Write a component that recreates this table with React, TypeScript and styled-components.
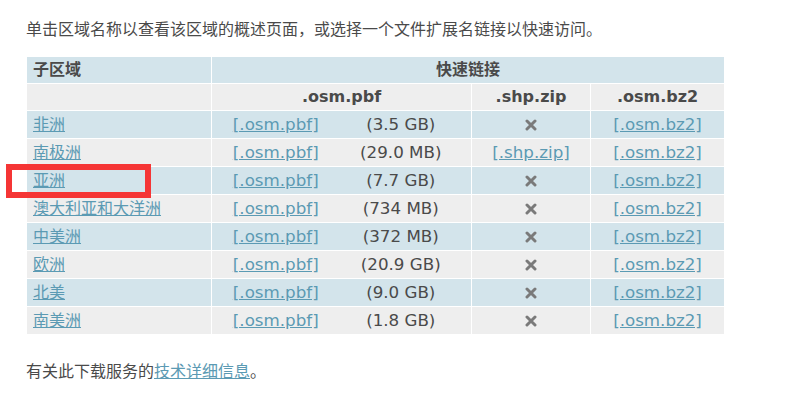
import React from 'react'
import styled, { createGlobalStyle } from 'styled-components'

const GlobalStyle = createGlobalStyle`
  body {
    margin: 0;
    background: #fff;
    font-family: 'DejaVu Sans', Verdana, 'Noto Sans CJK SC', sans-serif;
    font-size: 16px;
    color: #4a4a4a;
  }
`

interface Region {
  name: string
  size: string
  shp?: boolean
  marked?: boolean
}

const regions: Region[] = [
  { name: '非洲', size: '(3.5 GB)' },
  { name: '南极洲', size: '(29.0 MB)', shp: true },
  { name: '亚洲', size: '(7.7 GB)', marked: true },
  { name: '澳大利亚和大洋洲', size: '(734 MB)' },
  { name: '中美洲', size: '(372 MB)' },
  { name: '欧洲', size: '(20.9 GB)' },
  { name: '北美', size: '(9.0 GB)' },
  { name: '南美洲', size: '(1.8 GB)' },
]

function CrossIcon() {
  return (
    <svg width='12' height='12' viewBox='0 0 12 12'>
      <path d='M2 2 L10 10 M10 2 L2 10' stroke='#7a7a7a' strokeWidth='3' strokeLinecap='round' />
    </svg>
  )
}

export default function App() {
  return (
    <Page>
      <GlobalStyle />
      <Text>单击区域名称以查看该区域的概述页面，或选择一个文件扩展名链接以快速访问。</Text>
      <Table>
        <colgroup>
          <col style={{ width: 185 }} />
          <col style={{ width: 128 }} />
          <col style={{ width: 132 }} />
          <col style={{ width: 119 }} />
          <col style={{ width: 134 }} />
        </colgroup>
        <thead>
          <Row $tone='blue'>
            <HeadCell $align='left'>子区域</HeadCell>
            <HeadCell colSpan={4}>快速链接</HeadCell>
          </Row>
          <Row $tone='grey'>
            <HeadCell />
            <HeadCell colSpan={2}>.osm.pbf</HeadCell>
            <HeadCell>.shp.zip</HeadCell>
            <HeadCell>.osm.bz2</HeadCell>
          </Row>
        </thead>
        <tbody>
          {regions.map((r, i) => (
            <Row key={r.name} $tone={i % 2 === 0 ? 'blue' : 'grey'}>
              <NameCell>
                <Link href='#'>{r.name}</Link>
                {r.marked && <Marker />}
              </NameCell>
              <LinkCell>
                <Link href='#'>[.osm.pbf]</Link>
              </LinkCell>
              <SizeCell>{r.size}</SizeCell>
              <Cell>{r.shp ? <Link href='#'>[.shp.zip]</Link> : <CrossIcon />}</Cell>
              <Cell>
                <Link href='#'>[.osm.bz2]</Link>
              </Cell>
            </Row>
          ))}
        </tbody>
      </Table>
      <Footer>
        有关此下载服务的<Link href='#'>技术详细信息</Link>。
      </Footer>
    </Page>
  )
}

const Page = styled.div`
  padding: 18px 0 0 26px;
`

const Text = styled.p`
  margin: 0 0 14px;
  line-height: 24px;
`

const Footer = styled(Text)`
  margin: 25px 0 0;
`

const Table = styled.table`
  width: 698px;
  table-layout: fixed;
  border-collapse: collapse;
`

const Row = styled.tr<{ $tone: 'blue' | 'grey' }>`
  background: ${(p) => (p.$tone === 'blue' ? '#d3e4eb' : '#eeeeee')};
`

const Cell = styled.td`
  border: 1px solid #fff;
  padding: 3px 6px;
  font-size: 16.7px;
  line-height: 21px;
  height: 21px;
  text-align: center;
  vertical-align: middle;
  white-space: nowrap;

  svg {
    display: inline-block;
    vertical-align: -1px;
  }
`

const HeadCell = styled.th<{ $align?: 'left' | 'center' }>`
  border: 1px solid #fff;
  padding: 3px 6px;
  line-height: 20px;
  height: 20px;
  font-weight: bold;
  color: #4a4a4a;
  text-align: ${(p) => p.$align ?? 'center'};
`

const NameCell = styled(Cell)`
  position: relative;
  font-size: 16px;
  text-align: left;
`

const LinkCell = styled(Cell)`
  border-right-style: hidden;
`

const SizeCell = styled(Cell)`
  border-left-style: hidden;
  padding-right: 15px;
`

const Link = styled.a`
  color: #5b9ab3;
  text-decoration: underline;
`

const Marker = styled.span`
  position: absolute;
  left: -21px;
  top: -3px;
  width: 133px;
  height: 22px;
  border: 6px solid #f53535;
  pointer-events: none;
`
